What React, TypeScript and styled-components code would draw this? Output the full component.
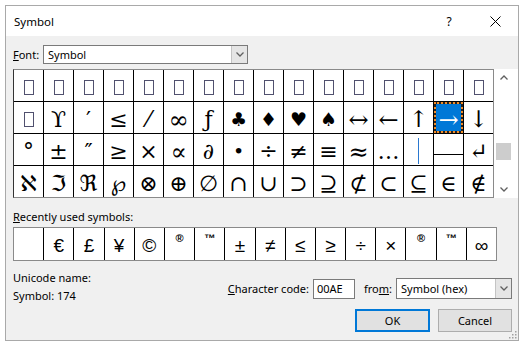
import React from 'react';
import styled, { createGlobalStyle } from 'styled-components';

const GlobalStyle = createGlobalStyle`
  html, body {
    margin: 0;
    padding: 0;
    background: #fff;
  }
  body {
    font-family: "Noto Sans", "Open Sans", sans-serif;
    font-size: 11px;
    color: #000;
  }
  * {
    box-sizing: border-box;
  }
`;

const Dialog = styled.div`
  position: relative;
  margin: 5px 0 0 5px;
  width: 514px;
  height: 336px;
  border: 1px solid #a9a9a9;
  background: #f0f0f0;
  display: flex;
  flex-direction: column;
`;

const TitleBar = styled.div`
  height: 30px;
  background: #fff;
  display: flex;
  align-items: center;
  padding-left: 8px;
`;

const Title = styled.div`
  flex: 1;
  font-size: 11.5px;
`;

const CaptionButton = styled.div`
  width: 46px;
  height: 30px;
  display: flex;
  align-items: center;
  justify-content: center;
  font-size: 12px;
`;

const Body = styled.div`
  flex: 1;
  display: flex;
  flex-direction: column;
  padding: 9px 6px 0 7px;
`;

const FontRow = styled.div`
  display: grid;
  grid-template-columns: 30px 205px;
  align-items: center;
  height: 19px;
`;

const Label = styled.span`
  white-space: nowrap;
  line-height: 16px;
`;

const Combo = styled.div<{ $w: number; $h: number }>`
  width: ${p => p.$w}px;
  height: ${p => p.$h}px;
  border: 1px solid #7a7a7a;
  background: #fff;
  display: flex;
  align-items: center;
  padding-left: 4px;
`;

const ComboText = styled.span`
  flex: 1;
  line-height: 16px;
`;

const DropButton = styled.div`
  width: 16px;
  align-self: stretch;
  background: #e5e5e5;
  border-left: 1px solid #c4c4c4;
  display: flex;
  align-items: center;
  justify-content: center;
`;

const GridRow = styled.div`
  display: flex;
  margin-top: 5px;
  margin-right: -6px;
`;

const SymbolGrid = styled.div`
  width: 481px;
  border: 1px solid #8a8a8a;
  border-left-color: #333;
  background: #000;
  display: grid;
  grid-template-columns: repeat(16, 29px);
  grid-auto-rows: 31px;
  gap: 1px;
`;

const Cell = styled.div<{ $selected?: boolean; $size: number }>`
  background: ${p => (p.$selected ? '#0078d7' : '#fff')};
  color: ${p => (p.$selected ? '#fff' : '#000')};
  display: flex;
  align-items: center;
  justify-content: center;
  padding-top: 4px;
  font-family: "DejaVu Serif", "DejaVu Sans", serif;
  font-size: ${p => p.$size}px;
  line-height: 1;
  ${p =>
    p.$selected &&
    `
    box-shadow: inset 0 0 0 2px #222;
    outline: 2px dotted #f28c28;
    outline-offset: -2px;
  `}
`;

const MissingGlyph = styled.span`
  width: 10px;
  height: 15px;
  border: 1px solid #50506e;
`;

const VBar = styled.span`
  width: 1px;
  height: 26px;
  margin-top: -2px;
  background: #2a78d0;
`;

const HBar = styled.span`
  height: 1px;
  width: 100%;
  background: #000;
  margin-top: 5px;
`;

const ScrollBar = styled.div`
  width: 25px;
  background: #fff;
  display: flex;
  flex-direction: column;
  padding-left: 2px;
`;

const ScrollArrow = styled.div`
  width: 15px;
  height: 17px;
  display: flex;
  align-items: center;
  justify-content: center;
`;

const ScrollTrack = styled.div`
  flex: 1;
  padding-top: 57px;
`;

const ScrollThumb = styled.div`
  width: 15px;
  height: 17px;
  background: #cdcdcd;
`;

const SectionLabel = styled.div`
  margin-top: 11px;
  line-height: 16px;
`;

const RecentGrid = styled.div`
  margin-top: 2px;
  width: 484px;
  height: 34px;
  border: 1px solid #8a8a8a;
  background: #000;
  display: grid;
  grid-template-columns: repeat(16, 1fr);
  gap: 1px;
`;

const RecentCell = styled.div<{ $small?: boolean }>`
  background: #fff;
  display: flex;
  justify-content: center;
  align-items: ${p => (p.$small ? 'flex-start' : 'center')};
  padding-top: ${p => (p.$small ? '5px' : '2px')};
  font-family: "Liberation Sans", Arial, sans-serif;
  font-size: ${p => (p.$small ? '11px' : '19px')};
  font-weight: ${p => (p.$small ? 700 : 400)};
  line-height: 1;
`;

const BottomArea = styled.div`
  display: flex;
  margin-top: 8px;
`;

const InfoCol = styled.div`
  flex: 1;
  display: flex;
  flex-direction: column;
  line-height: 18px;
`;

const ActionCol = styled.div`
  display: flex;
  flex-direction: column;
  align-items: flex-end;
  padding-top: 9px;
`;

const CodeRow = styled.div`
  display: flex;
  align-items: center;
`;

const CodeInput = styled.div`
  width: 42px;
  height: 20px;
  margin-left: 4px;
  border: 1px solid #7a7a7a;
  background: #fff;
  padding-left: 3px;
  line-height: 18px;
`;

const FromLabel = styled(Label)`
  margin: 0 4px 0 9px;
`;

const ButtonRow = styled.div`
  display: flex;
  gap: 8px;
  margin-top: 10px;
`;

const Button = styled.div<{ $default?: boolean; $w: number }>`
  width: ${p => p.$w}px;
  height: 23px;
  background: #e1e1e1;
  border: ${p => (p.$default ? '2px solid #0078d7' : '1px solid #adadad')};
  display: flex;
  align-items: center;
  justify-content: center;
`;

const Grip = styled.svg`
  position: absolute;
  right: 1px;
  bottom: 1px;
`;

type Glyph = string | 'box' | 'vbar' | 'hbar';

const rows: Glyph[][] = [
  Array(16).fill('box'),
  ['box', 'ϒ', '′', '≤', '⁄', '∞', 'ƒ', '♣', '♦', '♥', '♠', '↔', '←', '↑', '→', '↓'],
  ['°', '±', '″', '≥', '×', '∝', '∂', '•', '÷', '≠', '≡', '≈', '…', 'vbar', 'hbar', '↵'],
  ['ℵ', 'ℑ', 'ℜ', '℘', '⊗', '⊕', '∅', '∩', '∪', '⊃', '⊇', '⊄', '⊂', '⊆', '∈', '∉'],
];

// glyph sizes vary in the Symbol font; these bring them near the original
const glyphSize = (g: Glyph): number => {
  if ('♣♦♥♠•'.includes(g)) return 19;
  if ('↔←→'.includes(g)) return 24;
  if ('↑↓'.includes(g)) return 23;
  if ('∞∝≈'.includes(g)) return 24;
  return 22;
};

const recent = ['', '€', '£', '¥', '©', '®', '™', '±', '≠', '≤', '≥', '÷', '×', '®', '™', '∞'];

const Chevron = ({ up }: { up?: boolean }) => (
  <svg width="8" height="5" viewBox="0 0 8 5">
    <polyline
      points={up ? '0.5,4.5 4,1 7.5,4.5' : '0.5,0.5 4,4 7.5,0.5'}
      fill="none"
      stroke="#606060"
      strokeWidth="1.3"
    />
  </svg>
);

const renderGlyph = (g: Glyph) => {
  if (g === 'box') return <MissingGlyph />;
  if (g === 'vbar') return <VBar />;
  if (g === 'hbar') return <HBar />;
  return g;
};

const App: React.FC = () => {
  return (
    <>
      <GlobalStyle />
      <Dialog>
        <TitleBar>
          <Title>Symbol</Title>
          <CaptionButton>?</CaptionButton>
          <CaptionButton>
            <svg width="11" height="11" viewBox="0 0 11 11">
              <path d="M0.5 0.5 L10.5 10.5 M10.5 0.5 L0.5 10.5" stroke="#000" strokeWidth="1" />
            </svg>
          </CaptionButton>
        </TitleBar>
        <Body>
          <FontRow>
            <Label>
              <u>F</u>ont:
            </Label>
            <Combo $w={205} $h={19}>
              <ComboText>Symbol</ComboText>
              <DropButton>
                <Chevron />
              </DropButton>
            </Combo>
          </FontRow>

          <GridRow>
            <SymbolGrid>
              {rows.map((row, r) =>
                row.map((g, c) => (
                  <Cell key={`${r}-${c}`} $selected={r === 1 && c === 14} $size={glyphSize(g)}>
                    {renderGlyph(g)}
                  </Cell>
                ))
              )}
            </SymbolGrid>
            <ScrollBar>
              <ScrollArrow>
                <Chevron up />
              </ScrollArrow>
              <ScrollTrack>
                <ScrollThumb />
              </ScrollTrack>
              <ScrollArrow>
                <Chevron />
              </ScrollArrow>
            </ScrollBar>
          </GridRow>

          <SectionLabel>
            <u>R</u>ecently used symbols:
          </SectionLabel>
          <RecentGrid>
            {recent.map((s, i) => (
              <RecentCell key={i} $small={s === '®' || s === '™'}>
                {s}
              </RecentCell>
            ))}
          </RecentGrid>

          <BottomArea>
            <InfoCol>
              <span>Unicode name:</span>
              <span>Symbol: 174</span>
            </InfoCol>
            <ActionCol>
              <CodeRow>
                <Label>
                  <u>C</u>haracter code:
                </Label>
                <CodeInput>00AE</CodeInput>
                <FromLabel>
                  fro<u>m</u>:
                </FromLabel>
                <Combo $w={116} $h={21}>
                  <ComboText>Symbol (hex)</ComboText>
                  <DropButton>
                    <Chevron />
                  </DropButton>
                </Combo>
              </CodeRow>
              <ButtonRow>
                <Button $default $w={75}>OK</Button>
                <Button $w={74}>Cancel</Button>
              </ButtonRow>
            </ActionCol>
          </BottomArea>
        </Body>
        <Grip width="10" height="10" viewBox="0 0 10 10">
          {[
            [8, 2], [8, 5], [5, 5], [8, 8], [5, 8], [2, 8],
          ].map(([x, y], i) => (
            <rect key={i} x={x} y={y} width="1.5" height="1.5" fill="#a0a0a0" />
          ))}
        </Grip>
      </Dialog>
    </>
  );
};

export default App;
